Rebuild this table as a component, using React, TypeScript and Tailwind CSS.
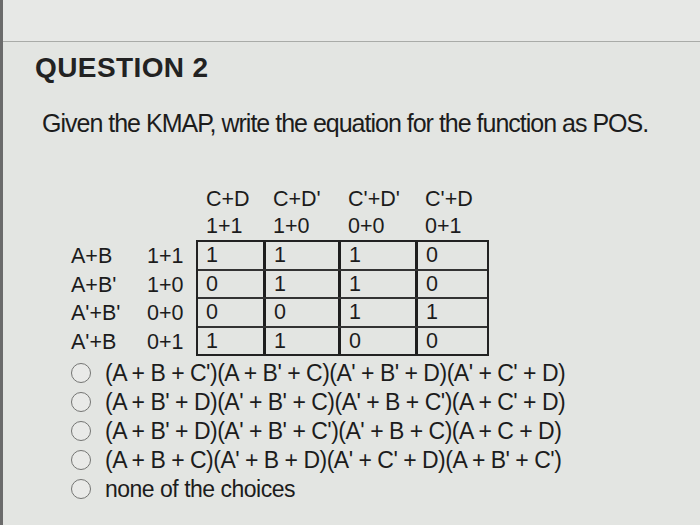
import React from "react";

const cols = [
  { top: "C+D", bottom: "1+1", w: "w-[67px]" },
  { top: "C+D'", bottom: "1+0", w: "w-[75px]" },
  { top: "C'+D'", bottom: "0+0", w: "w-[77px]" },
  { top: "C'+D", bottom: "0+1", w: "w-[74px]" },
];

const rows = [
  { label: "A+B", code: "1+1", vals: ["1", "1", "1", "0"] },
  { label: "A+B'", code: "1+0", vals: ["0", "1", "1", "0"] },
  { label: "A'+B'", code: "0+0", vals: ["0", "0", "1", "1"] },
  { label: "A'+B", code: "0+1", vals: ["1", "1", "0", "0"] },
];

const cellWidths = ["w-[65px]", "w-[75px]", "w-[77px]", "w-[72px]"];

const choices = [
  "(A + B + C')(A + B' + C)(A' + B' + D)(A' + C' + D)",
  "(A + B' + D)(A' + B' + C)(A' + B + C')(A + C' + D)",
  "(A + B' + D)(A' + B' + C')(A' + B + C)(A + C + D)",
  "(A + B + C)(A' + B + D)(A' + C' + D)(A + B' + C')",
  "none of the choices",
];

const App: React.FC = () => {
  return (
    <div
      className="w-[700px] h-[525px] overflow-hidden bg-[#e3e5e2] text-[#1c1c1c] border-l-[3px] border-[#6b6b6b]"
      style={{ fontFamily: '"Liberation Sans", Arial, sans-serif' }}
    >
      <div className="h-[42px] bg-[#e7e8e6] border-b border-[#a9aba8]"></div>

      <h1 className="mt-[10px] ml-[32px] text-[28px] leading-[32px] font-bold tracking-[0.4px] text-[#222]">
        QUESTION 2
      </h1>

      <p className="mt-[24px] ml-[39px] text-[25px] leading-[30px] tracking-[-1px] whitespace-nowrap">
        Given the KMAP, write the equation for the function as POS.
      </p>

      <div className="mt-[49px] ml-[68px] text-[21.5px] leading-[24px]">
        <div className="flex">
          <div className="w-[125px]"></div>
          {cols.map((c) => (
            <div key={c.top} className={`${c.w} pl-[10px]`}>
              <div className="h-[27px]">{c.top}</div>
              <div className="h-[26px]">{c.bottom}</div>
            </div>
          ))}
        </div>

        <div className="flex">
          <div className="w-[125px] flex flex-col pt-[2px]">
            {rows.map((r) => (
              <div key={r.label} className="h-[28.5px] flex items-center">
                <span className="w-[76px]">{r.label}</span>
                <span>{r.code}</span>
              </div>
            ))}
          </div>
          <div className="border-2 border-[#222]">
            {rows.map((r, i) => (
              <div
                key={r.label}
                className={`flex ${i > 0 ? "border-t-2 border-[#333]" : ""}`}
              >
                {r.vals.map((v, j) => (
                  <div
                    key={j}
                    className={`h-[26.5px] flex items-center pl-[8px] ${cellWidths[j]} ${
                      j > 0 ? "border-l-[3px] border-[#1e1e1e]" : ""
                    }`}
                  >
                    {v}
                  </div>
                ))}
              </div>
            ))}
          </div>
        </div>
      </div>

      <div className="mt-[2px] ml-[68px] flex flex-col">
        {choices.map((c) => (
          <div key={c} className="h-[29px] flex items-center">
            <span className="w-[20px] h-[20px] rounded-full border-[1.5px] border-[#747573] bg-[#e9eae8]"></span>
            <span className="ml-[14px] text-[23px] leading-[28px] tracking-[-0.5px]">{c}</span>
          </div>
        ))}
      </div>
    </div>
  );
};

export default App;
